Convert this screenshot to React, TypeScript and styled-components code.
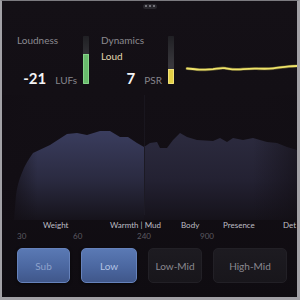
import React from "react";
import styled, { createGlobalStyle } from "styled-components";

const Global = createGlobalStyle`
  html, body { margin: 0; padding: 0; background: #0f0c11; }
  body { font-family: Lato, "Open Sans", "Liberation Sans", sans-serif; }
`;

const Frame = styled.div`
  width: 300px;
  height: 300px;
  box-sizing: border-box;
  border-top: 1px solid #7c7b80;
  border-left: 2px solid #a2a1a6;
  border-right: 3px solid #a2a1a6;
  border-bottom: 3px solid #a2a1a6;
  background: linear-gradient(180deg, #141016 0%, #120e14 60%, #0f0c11 100%);
  display: flex;
  flex-direction: column;
  overflow: hidden;
`;

const TopBar = styled.div`
  height: 10px;
  display: flex;
  justify-content: center;
  align-items: center;
`;

const Grip = styled.div`
  width: 14px;
  height: 5px;
  border-radius: 3px;
  background: #29272d;
  display: flex;
  align-items: center;
  justify-content: space-evenly;
`;

const GripDot = styled.span`
  width: 2px;
  height: 2px;
  border-radius: 1px;
  background: #8d8b92;
`;

const Header = styled.div`
  display: flex;
  align-items: stretch;
  height: 48px;
  margin-top: 25px;
  padding-left: 15px;
`;

const Metric = styled.div<{ $w: number; $gap: number }>`
  display: flex;
  width: ${(p) => p.$w}px;
  margin-right: ${(p) => p.$gap}px;
`;

const MetricText = styled.div`
  flex: 1;
  display: flex;
  flex-direction: column;
`;

const Label = styled.div`
  font-size: 10px;
  line-height: 12px;
  margin-top: -2px;
  color: #8b8a90;
`;

const Status = styled.div`
  font-size: 10px;
  line-height: 12px;
  margin-top: 4px;
  color: #e2d8ae;
`;

const ValueRow = styled.div`
  margin-top: auto;
  margin-bottom: -2px;
  display: flex;
  justify-content: flex-end;
  align-items: baseline;
  padding-right: 6px;
`;

const Number = styled.span`
  font-size: 15px;
  line-height: 15px;
  font-weight: 700;
  color: #f4f4f6;
`;

const Unit = styled.span`
  font-size: 10px;
  color: #86858c;
  margin-left: 9px;
`;

const Meter = styled.div`
  width: 6px;
  border-radius: 1px;
  background: linear-gradient(180deg, #202024 0%, #39383d 60%, #34333a 100%);
  display: flex;
  flex-direction: column;
  justify-content: flex-end;
  overflow: hidden;
`;

const MeterFill = styled.div<{ $c: string; $edge: string }>`
  background: ${(p) => p.$c};
  box-shadow: inset 0 0 0 1px ${(p) => p.$edge};
`;

const Wave = styled.svg`
  flex: 1;
  margin-top: 28px;
  height: 10px;
  overflow: visible;
`;

const Chart = styled.svg`
  display: block;
  margin-top: 11px;
  width: 295px;
  height: 125px;
`;

const Axis = styled.div<{ $h: number }>`
  position: relative;
  height: ${(p) => p.$h}px;
`;

const AxisText = styled.span<{ $dim?: boolean }>`
  position: absolute;
  top: 0;
  font-size: 8px;
  line-height: ${(p) => (p.$dim ? 10 : 11)}px;
  white-space: nowrap;
  color: ${(p) => (p.$dim ? "#5c5a61" : "#bfbec5")};
`;

const Buttons = styled.div`
  display: flex;
  gap: 11px;
  margin-top: 7px;
  padding-left: 15px;
`;

const Band = styled.button<{ $w: number; $active?: boolean; $dimText?: boolean }>`
  width: ${(p) => p.$w}px;
  height: 35px;
  border-radius: 5px;
  font-family: Lato, "Open Sans", "Liberation Sans", sans-serif;
  font-size: 10px;
  padding: 0;
  border: 1px solid ${(p) => (p.$active ? "#6682bb" : "#222026")};
  background: ${(p) =>
    p.$active
      ? "linear-gradient(180deg, #5a79b4 0%, #4b67a0 55%, #40578a 100%)"
      : "linear-gradient(180deg, #1d1b21 0%, #18161b 100%)"};
  color: ${(p) => (p.$active ? (p.$dimText ? "#8ea3cc" : "#b3c3e3") : "#8a8990")};
  box-shadow: ${(p) => (p.$active ? "0 1px 3px rgba(0,0,0,0.6)" : "none")};
`;

const labels = [
  { t: "Weight", x: 41 },
  { t: "Warmth | Mud", x: 108 },
  { t: "Body", x: 179 },
  { t: "Presence", x: 221 },
  { t: "Det", x: 281 },
];

const freqs = [
  { t: "30", x: 15 },
  { t: "60", x: 71 },
  { t: "240", x: 135 },
  { t: "900", x: 198 },
];

const bands = [
  { t: "Sub", w: 53, a: true, d: true },
  { t: "Low", w: 56, a: true },
  { t: "Low-Mid", w: 54 },
  { t: "High-Mid", w: 74 },
];

const leftArea =
  "M14 220 L16 195 C18 180 24 165 33 153 L50 145 L67 134 L77 133 L87 135 L100 131 L110 131 L120 137 L128 137 L137 143 L144 147 L144 220 Z";
const rightArea =
  "M144 220 L144 147 L150 143 L157 142 L160 148 L167 148 L173 140 L180 133 L187 137 L197 140 L213 141 L220 138 L227 142 L233 138 L243 140 L253 138 L267 142 L277 143 L287 147 L297 150 L297 220 Z";

const wavePath =
  "M0 4.5 C4 4.5 6 5.2 10 5.5 C16 6 20 5.5 26 5.2 C30 4.8 34 3.6 38 4.2 C42 4.8 46 5.8 52 5.4 C58 5 62 4.4 70 4.6 C76 4.8 80 5 86 4.4 C92 3.8 96 2.8 102 2.4 C105 2.2 108 2 110 2";

export default function App() {
  return (
    <>
      <Global />
      <Frame>
        <TopBar>
          <Grip>
            <GripDot />
            <GripDot />
            <GripDot />
          </Grip>
        </TopBar>
        <Header>
          <Metric $w={74} $gap={12}>
            <MetricText>
              <Label>Loudness</Label>
              <ValueRow>
                <Number>-21</Number>
                <Unit>LUFs</Unit>
              </ValueRow>
            </MetricText>
            <Meter>
              <MeterFill $c="#69bb6c" $edge="#85d488" style={{ height: "62%" }} />
            </Meter>
          </Metric>
          <Metric $w={75} $gap={13}>
            <MetricText>
              <Label>Dynamics</Label>
              <Status>Loud</Status>
              <ValueRow>
                <Number>7</Number>
                <Unit>PSR</Unit>
              </ValueRow>
            </MetricText>
            <Meter>
              <MeterFill $c="#e3cf45" $edge="#f2e27a" style={{ height: "31%" }} />
            </Meter>
          </Metric>
          <Wave viewBox="0 0 110 10" preserveAspectRatio="none">
            <path d={wavePath} fill="none" stroke="#d9cf54" strokeWidth="3" strokeLinecap="round" opacity="0.35" />
            <path d={wavePath} fill="none" stroke="#efe36a" strokeWidth="1.8" strokeLinecap="round" />
          </Wave>
        </Header>
        <Chart viewBox="2 95 295 125">
          <defs>
            <linearGradient id="gl" x1="0" y1="0" x2="0" y2="1">
              <stop offset="0" stopColor="#3a3d5e" />
              <stop offset="0.55" stopColor="#2a2a40" />
              <stop offset="1" stopColor="#16131b" />
            </linearGradient>
            <linearGradient id="gr" x1="0" y1="0" x2="0" y2="1">
              <stop offset="0" stopColor="#2c2b3f" />
              <stop offset="0.55" stopColor="#232132" />
              <stop offset="1" stopColor="#15121a" />
            </linearGradient>
            <linearGradient id="gh" x1="0" y1="0" x2="1" y2="0">
              <stop offset="0" stopColor="#120e14" stopOpacity="0.9" />
              <stop offset="0.12" stopColor="#120e14" stopOpacity="0" />
              <stop offset="0.85" stopColor="#120e14" stopOpacity="0" />
              <stop offset="1" stopColor="#120e14" stopOpacity="0.6" />
            </linearGradient>
          </defs>
          <line x1="144.5" y1="95" x2="144.5" y2="215" stroke="#19161e" strokeWidth="1" />
          <path d={leftArea} fill="url(#gl)" />
          <path d={rightArea} fill="url(#gr)" />
          <rect x="2" y="95" width="295" height="125" fill="url(#gh)" />
          <line x1="144.5" y1="147" x2="144.5" y2="215" stroke="#1c1a24" strokeWidth="1" />
        </Chart>
        <Axis $h={11}>
          {labels.map((l) => (
            <AxisText key={l.t} style={{ left: l.x }}>
              {l.t}
            </AxisText>
          ))}
        </Axis>
        <Axis $h={10}>
          {freqs.map((f) => (
            <AxisText key={f.t} $dim style={{ left: f.x }}>
              {f.t}
            </AxisText>
          ))}
        </Axis>
        <Buttons>
          {bands.map((b) => (
            <Band key={b.t} $w={b.w} $active={b.a} $dimText={b.d}>
              {b.t}
            </Band>
          ))}
        </Buttons>
      </Frame>
    </>
  );
}
